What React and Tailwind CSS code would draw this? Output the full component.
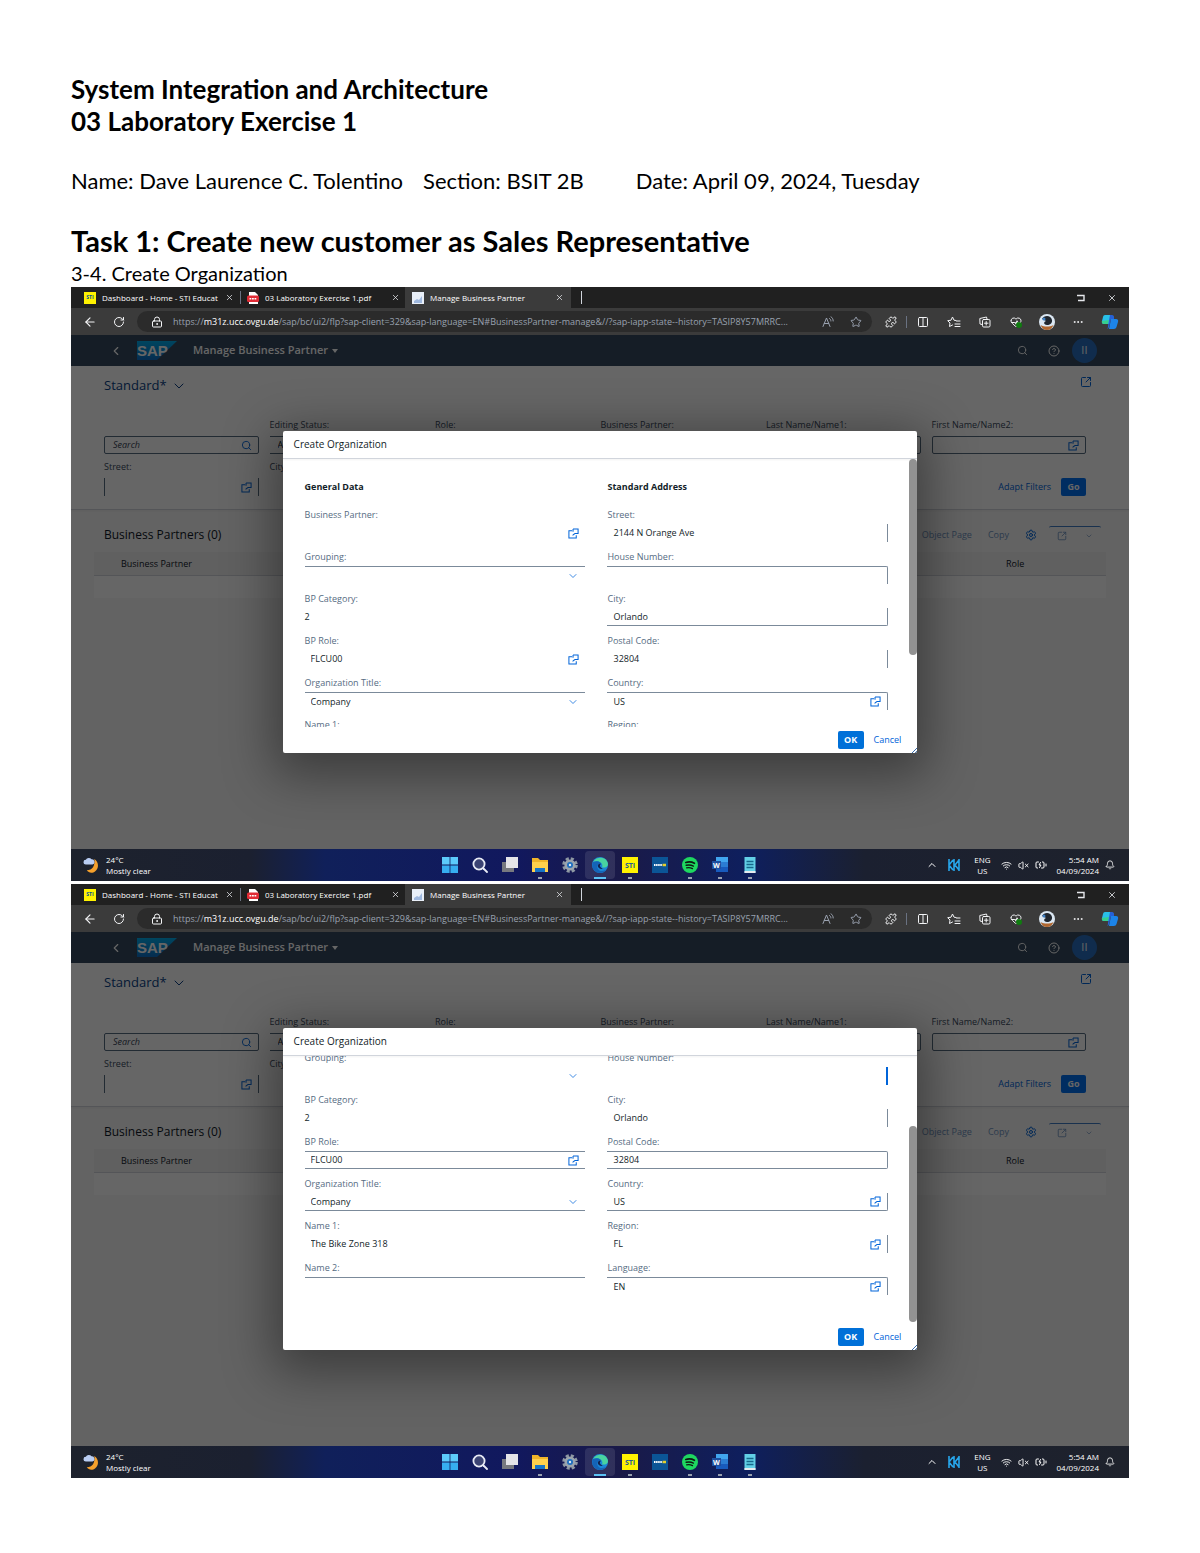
import { useId } from "react";
import {
  ArrowLeft,
  BatteryCharging,
  Bell,
  ChevronDown,
  ChevronLeft,
  ChevronUp,
  CircleQuestionMark,
  Columns2,
  Ellipsis,
  HeartPulse,
  LockKeyhole,
  Puzzle,
  RotateCw,
  Search,
  Settings,
  SquareArrowOutUpRight,
  Star,
  VolumeX,
  Wifi,
  X,
} from "lucide-react";

const PAGE_URL = {
  scheme: "https://",
  host: "m31z.ucc.ovgu.de",
  path: "/sap/bc/ui2/flp?sap-client=329&sap-language=EN#BusinessPartner-manage&//?sap-iapp-state--history=TASIP8Y57MRRC...",
};

const firstView = {
  scrolled: false,
  left: [
    { label: "Business Partner:", value: "", icon: "help" },
    { label: "Grouping:", value: "", icon: "down", edge: "border-t" },
    { label: "BP Category:", value: "2", icon: "none" },
    { label: "BP Role:", value: "FLCU00", icon: "help" },
    { label: "Organization Title:", value: "Company", icon: "down", edge: "border-t" },
    { label: "Name 1:", value: "The Bike Zone 318" },
  ],
  right: [
    { label: "Street:", value: "2144 N Orange Ave", edge: "border-r" },
    { label: "House Number:", value: "", edge: "border-t border-r rounded-tr-xs" },
    { label: "City:", value: "Orlando", edge: "border-b border-r rounded-br-xs" },
    { label: "Postal Code:", value: "32804", edge: "border-r" },
    { label: "Country:", value: "US", icon: "help", edge: "border-t border-r rounded-tr-xs" },
    { label: "Region:", value: "FL", icon: "help" },
  ],
};

const secondView = {
  scrolled: true,
  left: [
    { label: "Business Partner:", value: "", icon: "help" },
    { label: "Grouping:", value: "", icon: "down" },
    { label: "BP Category:", value: "2", icon: "none" },
    { label: "BP Role:", value: "FLCU00", icon: "help", edge: "border-y" },
    { label: "Organization Title:", value: "Company", icon: "down", edge: "border-b" },
    { label: "Name 1:", value: "The Bike Zone 318" },
    { label: "Name 2:", value: "", edge: "border-t" },
  ],
  right: [
    { label: "Street:", value: "2144 N Orange Ave", edge: "border-r" },
    { label: "House Number:", value: "", edge: "border-r-2", focus: true },
    { label: "City:", value: "Orlando", edge: "border-r" },
    { label: "Postal Code:", value: "32804", edge: "border-y border-r rounded-r-xs" },
    { label: "Country:", value: "US", icon: "help", edge: "border-b border-r rounded-br-xs" },
    { label: "Region:", value: "FL", icon: "help", edge: "border-r" },
    { label: "Language:", value: "EN", icon: "help", edge: "border-t border-r rounded-tr-xs" },
  ],
};

function ValueHelpIcon() {
  return (
    <svg viewBox="0 0 12 12" className="size-[11px]" fill="none" stroke="currentColor" strokeWidth="1.100">
      <path d="M4.500 3H1v8h8V8" />
      <path d="M5.500 1H11v5H7.500" />
      <path d="M5.500 1v3M5 8l2.500-2" />
    </svg>
  );
}

function SapLogo() {
  return (
    <svg viewBox="0 0 40 19" className="h-[19px] w-10" role="img" aria-label="SAP">
      <defs>
        <linearGradient id="sap" x1="0" y1="0" x2="0" y2="1">
          <stop offset="0" stopColor="#00aeef" />
          <stop offset="1" stopColor="#0f6fc6" />
        </linearGradient>
      </defs>
      <path d="M0 0h40L20 19H0z" fill="url(#sap)" />
      <text x="0" y="15" fill="#fff" fontSize="15" fontWeight="700" fontFamily="Liberation Sans, sans-serif">
        SAP
      </text>
    </svg>
  );
}

function ReadAloudIcon() {
  return (
    <svg viewBox="0 0 12 12" className="size-3" fill="none" stroke="currentColor" strokeLinecap="round">
      <path d="M1 10.500L4.500 2 8 10.500M2.300 7.500h4.400" />
      <path d="M7.500 2.500c1 .6 1.400 1.500 1.400 2.500M9 .800C10.500 1.800 11.200 3.200 11.200 5" />
    </svg>
  );
}

function FavoritesIcon() {
  return (
    <svg viewBox="0 0 14 12" className="h-3 w-3.5" fill="none" stroke="currentColor" strokeLinecap="round" strokeLinejoin="round">
      <path d="M9 4.500L7 4.200 5.500 1 4 4.200l-3.300.5L3 7l-.5 3.500L5.500 9" />
      <path d="M9.500 5H13M8 8h5M8 10.500h5" />
    </svg>
  );
}

function CollectionsIcon() {
  return (
    <svg viewBox="0 0 12 12" className="size-3" fill="none" stroke="currentColor" strokeLinejoin="round" strokeLinecap="round">
      <path d="M3 8.500L1 8 .8 2.500 7.500 1l.5 2" />
      <rect x="3.500" y="3.500" width="7.500" height="7.500" rx="1.200" />
      <path d="M7.200 5.500v3.500M5.500 7.200H9" />
    </svg>
  );
}

function Tab({ icon, title, active, className }) {
  return (
    <div className={`flex items-center ${active ? "bg-[#3b3b3b]" : ""} ${className}`}>
      {icon}
      <span className="ml-1.5 min-w-0 flex-1 overflow-hidden whitespace-nowrap">{title}</span>
      <button type="button" aria-label="Close tab" className="text-gray-200">
        <X className="size-[9px]" />
      </button>
    </div>
  );
}

function TabStrip() {
  return (
    <div className="flex h-[21px] items-stretch bg-[#202020] text-[8px] text-white">
      <Tab
        className="w-[169px] pl-[13px] pr-1.5"
        title="Dashboard - Home - STI Educat"
        icon={<span className="flex h-3 w-3 items-center justify-center bg-[#fff200] text-[5px] font-bold text-[#00549a]">STI</span>}
      />
      <span className="my-1 w-px bg-gray-500" />
      <Tab
        className="w-[164px] pl-1.5 pr-[5px]"
        title="03 Laboratory Exercise 1.pdf"
        icon={
          <svg viewBox="0 0 12 12" className="size-3">
            <path d="M2 0h6l3 3v9H2z" fill="#fff" />
            <rect y="3.500" width="12" height="6.500" rx="1.500" fill="#e02b35" />
            <path d="M2.500 6.800h7" stroke="#fff" strokeWidth="1.500" strokeDasharray="1.800 .7" />
          </svg>
        }
      />
      <Tab
        active
        className="w-[166px] pl-[7px] pr-[7px]"
        title="Manage Business Partner"
        icon={
          <svg viewBox="0 0 12 12" className="size-3">
            <rect width="12" height="12" fill="#e9eff8" />
            <path d="M2 9l3-2 2 1 3-4v7H2z" fill="#9fb8de" />
          </svg>
        }
      />
      <span className="my-1 ml-2.5 w-px bg-gray-300" />
      <div className="ml-auto flex items-center gap-[22px] pr-3 text-gray-200">
        <button type="button" aria-label="Restore window">
          <svg viewBox="0 0 8 8" className="size-2" fill="none" stroke="currentColor" strokeWidth="1.400">
            <path d="M0 1.500h7v5H1" />
          </svg>
        </button>
        <button type="button" aria-label="Close window">
          <X className="size-[10px]" />
        </button>
      </div>
    </div>
  );
}

function CopilotIcon() {
  return (
    <svg viewBox="0 0 18 16" className="h-4 w-[18px]">
      <path d="M4 1h6l-2 9H3C1 10 .5 8.500 1 7l1-4c.3-1.200 1-2 2-2z" fill="#29c0e8" />
      <path d="M1 7l7-1-1 4H3C1 10 .6 8.500 1 7z" fill="#37cf8e" />
      <path d="M10 5h5c2 0 2.600 1.500 2 3l-1.500 5c-.4 1.300-1.200 2-2.500 2H8z" fill="#1c84e8" />
      <path d="M9 1h2c1.500 0 2 1 2 2v2h-3L8 13c-.4 1.200-1 2-2.500 2 1 0 1.500-1 1.500-3z" fill="#2561d8" />
    </svg>
  );
}

function ProfilePicture() {
  return (
    <svg viewBox="0 0 16 16" className="size-4">
      <circle cx="8" cy="8" r="8" fill="#dbe7f2" />
      <path d="M3 5c2-4 9-4 10 1 .5 3-2 5-5 5S4 8 7 7z" fill="#20262e" />
      <path d="M1.500 11c4 2 9 2 13 0-1 3-3.500 5-6.500 5s-5.500-2-6.500-5z" fill="#b0672f" />
      <circle cx="5" cy="5" r="1.500" fill="#3c7fc4" />
    </svg>
  );
}

function AddressBar() {
  const tools = [
    ["Extensions", <Puzzle className="size-3" />],
    ["Split screen", <Columns2 className="size-3" />],
    ["Favorites", <FavoritesIcon />],
    ["Collections", <CollectionsIcon />],
    [
      "Browser essentials",
      <span className="relative">
        <HeartPulse className="size-3" />
        <span className="absolute right-0 bottom-0 size-1.5 rounded-full bg-[#107c10]" />
      </span>,
    ],
    ["Profile", <ProfilePicture />],
    ["Settings and more", <Ellipsis className="size-3" />],
  ];
  return (
    <div className="flex h-[27px] items-center bg-[#3b3b3b] text-gray-100">
      <button type="button" aria-label="Back" className="ml-3">
        <ArrowLeft className="size-3.5" />
      </button>
      <button type="button" aria-label="Refresh" className="ml-4">
        <RotateCw className="size-3" />
      </button>
      <div className="ml-3 flex h-[21px] min-w-0 flex-1 items-center rounded-full bg-[#2b2b2b] px-2.5">
        <LockKeyhole className="mr-2.5 ml-1 size-3 shrink-0" />
        <a href="#app" className="min-w-0 flex-1 overflow-hidden text-[9px] whitespace-nowrap text-gray-400">
          {PAGE_URL.scheme}
          <span className="text-white">{PAGE_URL.host}</span>
          {PAGE_URL.path}
        </a>
        <button type="button" aria-label="Read aloud" className="ml-2 text-gray-400">
          <ReadAloudIcon />
        </button>
        <button type="button" aria-label="Add to favorites" className="ml-4 text-gray-400">
          <Star className="size-3" />
        </button>
      </div>
      <div className="ml-1 flex items-center">
        {tools.map(([label, icon]) => (
          <button
            key={label}
            type="button"
            aria-label={label}
            className="flex w-[31px] justify-center first:border-r first:border-gray-500"
          >
            {icon}
          </button>
        ))}
      </div>
      <button type="button" aria-label="Copilot" className="mr-2.5 ml-2">
        <CopilotIcon />
      </button>
    </div>
  );
}

function ShellBar() {
  return (
    <header className="flex h-[31px] items-center bg-[#354a5f] text-white">
      <button type="button" aria-label="Back" className="ml-[38px]">
        <ChevronLeft className="size-3.5" />
      </button>
      <span className="ml-3.5">
        <SapLogo />
      </span>
      <button type="button" className="ml-4 flex items-center gap-1 text-[11px] font-semibold">
        Manage Business Partner
        <svg viewBox="0 0 6 4" className="h-1 w-1.5">
          <path d="M0 0h6L3 4z" fill="currentColor" />
        </svg>
      </button>
      <div className="mr-8 ml-auto flex items-center gap-5">
        <button type="button" aria-label="Search">
          <Search className="size-[11px]" />
        </button>
        <button type="button" aria-label="Help">
          <CircleQuestionMark className="size-3" />
        </button>
        <button type="button" className="-ml-2 size-[25px] rounded-full bg-[#2a6fc0] text-[11px] tracking-wide">
          II
        </button>
      </div>
    </header>
  );
}

function FilterField({ label, edge = "border rounded-xs", icon, ...input }) {
  const id = useId();
  return (
    <div>
      <label htmlFor={id} className="mb-1 block h-3.5 text-[9px] leading-[14px] whitespace-nowrap text-[#38495b]">
        {label}
      </label>
      <div className={`flex h-[18px] items-center border-[#556b81] bg-white pr-1.5 pl-2 text-[#0064d9] ${edge}`}>
        <input
          id={id}
          aria-label={label ? undefined : input.placeholder}
          className="w-0 flex-1 bg-transparent text-[9px] text-gray-900 outline-none placeholder:text-gray-700 placeholder:italic"
          {...input}
        />
        {icon}
      </div>
    </div>
  );
}

function FilterBar() {
  return (
    <section className="border-b border-gray-300 bg-white px-[33px] pr-[43px] pb-[13px] shadow-xs">
      <div className="mb-3 flex h-10 items-center justify-between text-[#0a3f86]">
        <button type="button" className="flex items-center gap-1 text-[13px]">
          Standard*
          <ChevronDown strokeWidth={1.5} className="size-4" />
        </button>
        <button type="button" aria-label="Share" className="-mr-1.5 mb-2 text-[#0064d9]">
          <SquareArrowOutUpRight className="size-3" />
        </button>
      </div>
      <div className="grid grid-cols-6 gap-x-[11px] gap-y-1.5">
        <FilterField placeholder="Search" icon={<Search className="size-[11px]" />} />
        <FilterField label="Editing Status:" defaultValue="All" edge="border-y" />
        <FilterField label="Role:" icon={<ValueHelpIcon />} />
        <FilterField label="Business Partner:" icon={<ValueHelpIcon />} />
        <FilterField label="Last Name/Name1:" icon={<ValueHelpIcon />} />
        <FilterField label="First Name/Name2:" icon={<ValueHelpIcon />} />
        <FilterField label="Street:" edge="border-x" icon={<ValueHelpIcon />} />
        <FilterField label="City:" edge="border-r" icon={<ValueHelpIcon />} />
        <div className="col-start-6 flex items-end justify-end gap-2.5 text-[9px]">
          <button type="button" className="h-[18px] text-[#0064d9]">
            Adapt Filters
          </button>
          <button type="button" className="h-[18px] w-[25px] rounded-xs bg-[#0070f2] font-bold text-white">
            Go
          </button>
        </div>
      </div>
    </section>
  );
}

function PartnerTable() {
  return (
    <section className="pt-4">
      <div className="mb-2 flex h-[18px] items-center pr-7 pl-[33px]">
        <h2 className="text-xs text-gray-900">Business Partners (0)</h2>
        <div className="ml-auto flex items-center gap-4 text-[9px] text-[#6f93bf]">
          <button type="button">Object Page</button>
          <button type="button">Copy</button>
          <button type="button" aria-label="Table settings" className="text-[#0064d9]">
            <Settings className="size-3" />
          </button>
          <button
            type="button"
            aria-label="Export"
            className="-ml-1 flex h-[18px] w-[52px] items-center justify-between rounded-xs border-t border-[#3f7cc4] px-2"
          >
            <SquareArrowOutUpRight className="size-2.5" />
            <ChevronDown className="size-2" />
          </button>
        </div>
      </div>
      <div className="px-[23px]">
        <table className="w-full table-fixed text-left text-[9px] text-gray-900">
          <thead>
            <tr className="h-[23px] border-b border-gray-300 bg-[#efeff0]">
              <th className="pl-[27px] font-normal">Business Partner</th>
              <th className="w-[100px] font-normal">Role</th>
            </tr>
          </thead>
          <tbody>
            <tr className="h-[23px] bg-white">
              <td colSpan={2} />
            </tr>
          </tbody>
        </table>
      </div>
    </section>
  );
}

function FormField({ label, value, icon, edge = "", focus }) {
  const id = useId();
  const control = "w-0 flex-1 appearance-none bg-transparent text-[9px] text-[#131e29] outline-none";
  return (
    <div className="mb-1.5">
      <label htmlFor={id} className="block text-[9px] leading-[18px] text-[#556b82]">
        {label}
      </label>
      {icon === "none" ? (
        <output id={id} className="block h-[18px] text-[9px] leading-[18px] text-[#131e29]">
          {value}
        </output>
      ) : (
        <div
          className={`flex h-[18px] items-center pr-1.5 pl-1.5 text-[#0064d9] ${
            focus ? "border-[#0064d9]" : "border-[#7b8a9a]"
          } ${edge}`}
        >
          {icon === "down" ? (
            <select id={id} defaultValue={value} className={control}>
              <option>{value}</option>
            </select>
          ) : (
            <input id={id} defaultValue={value} className={control} />
          )}
          {icon === "down" && <ChevronDown strokeWidth={1.5} className="size-3" />}
          {icon === "help" && <ValueHelpIcon />}
        </div>
      )}
    </div>
  );
}

function FormGroup({ title, fields }) {
  return (
    <fieldset className="min-w-0">
      <legend className="mb-2.5 text-[9px] leading-[18px] font-bold text-[#131e29]">{title}</legend>
      {fields.map((field) => (
        <FormField key={field.label} {...field} />
      ))}
    </fieldset>
  );
}

function CreateOrganizationDialog({ view }) {
  return (
    <div
      role="dialog"
      aria-label="Create Organization"
      className="relative w-3/5 overflow-hidden rounded-xs bg-white shadow-[0_12px_50px_10px_rgba(0,0,0,0.4)]"
    >
      <h3 className="border-b border-gray-300 px-[11px] text-[10px] leading-[27px] text-[#131e29] shadow-xs">
        Create Organization
      </h3>
      <div className="flex h-[268px] overflow-hidden">
        <div className={`grid flex-1 grid-cols-2 items-start gap-[22px] pr-[21px] pl-[22px] ${view.scrolled ? "-mt-24" : ""}`}>
          <div className="pt-[19px]">
            <FormGroup title="General Data" fields={view.left} />
          </div>
          <div className="pt-[19px]">
            <FormGroup title="Standard Address" fields={view.right} />
          </div>
        </div>
        <div className={`flex w-2 flex-col pb-0.5 ${view.scrolled ? "justify-end" : ""}`}>
          <div className="h-[196px] rounded-sm bg-[#929292]" />
        </div>
      </div>
      <div className="flex h-[26px] items-start justify-end gap-2.5 pt-1 pr-4 text-[9px]">
        <button type="button" className="h-[18px] w-[26px] rounded-xs bg-[#0070d8] font-bold text-white">
          OK
        </button>
        <button type="button" className="h-[18px] text-[#0064d9]">
          Cancel
        </button>
      </div>
      <svg viewBox="0 0 6 6" className="absolute right-0 bottom-0 size-1.5" stroke="#3c6fae">
        <path d="M1 6l5-5M4 6l2-2" />
      </svg>
    </div>
  );
}

const taskbarApps = [
  {
    name: "Start",
    icon: (
      <g fill="#5ccbfb">
        <path d="M0 0h7.600v7.600H0zM8.400 0H16v7.600H8.400z" />
        <path d="M0 8.400h7.600V16H0zM8.400 8.400H16V16H8.400z" fill="#36aef0" />
      </g>
    ),
  },
  {
    name: "Search",
    icon: (
      <g fill="#3b4373" stroke="#e8ebf5" strokeWidth="1.800" strokeLinecap="round">
        <circle cx="7" cy="7" r="5.600" />
        <path d="M11.500 11.500L15 15" />
      </g>
    ),
  },
  {
    name: "Task view",
    icon: (
      <g>
        <path d="M0 5h12v10H0z" fill="#77797f" />
        <path d="M4 0h12v11H4z" fill="#e4e4e8" />
      </g>
    ),
  },
  {
    name: "File Explorer",
    running: true,
    icon: (
      <g>
        <path d="M0 1h6l2 2h8v12H0z" fill="#f0b429" />
        <path d="M0 5h16v10H0z" fill="#ffd04c" />
        <path d="M3 11h10v4H3z" fill="#1774c7" />
      </g>
    ),
  },
  {
    name: "Settings",
    icon: (
      <g>
        <circle cx="8" cy="8" r="6.300" fill="none" stroke="#8e98a3" strokeWidth="3" strokeDasharray="3 1.950" />
        <circle cx="8" cy="8" r="5.600" fill="#9aa4ae" />
        <circle cx="8" cy="8" r="3" fill="#1e6fc0" />
        <circle cx="8" cy="8" r="1.200" fill="#dfe8f0" />
      </g>
    ),
  },
  {
    name: "Microsoft Edge",
    active: true,
    icon: (
      <g>
        <circle cx="8" cy="8" r="8" fill="#1b86d6" />
        <path d="M1 5C4-1 15-1 16 7c0 3-3 4-6 3.500C12 6 6 3 1 5z" fill="#49d3a0" />
        <path d="M1 5c5-2 8 0 8 2-3-1-5 2-3 5 1 2 4 3 8 1-3 4-9 4-12 0C0 11 0 7 1 5z" fill="#1464b8" />
        <path d="M9 7c-2 1-1 4 2 4.500C8 13 5 10 6 8c.6-1 2-1.400 3-1z" fill="#11224f" />
      </g>
    ),
  },
  {
    name: "STI",
    running: true,
    icon: (
      <g>
        <path d="M0 0h16v16H0z" fill="#fff200" />
        <text x="8" y="10.500" textAnchor="middle" fontSize="7" fontWeight="700" fill="#1a5a96">
          STI
        </text>
      </g>
    ),
  },
  {
    name: "GameQ",
    icon: (
      <g>
        <path d="M0 0h16v16H0z" fill="#0b5596" />
        <path d="M2 8h8" stroke="#fff" strokeWidth="2.200" strokeDasharray="1.500 .6" />
        <path d="M10.500 8H14" stroke="#e4cf2d" strokeWidth="2.500" />
      </g>
    ),
  },
  {
    name: "Spotify",
    running: true,
    icon: (
      <g fill="none" stroke="#0d1a12" strokeLinecap="round">
        <circle cx="8" cy="8" r="8" fill="#1ed760" stroke="none" />
        <path d="M3.800 5.500c3-.9 6-.6 8.600.8" strokeWidth="1.700" />
        <path d="M4.200 8.300c2.600-.7 5-.4 7.200.8" strokeWidth="1.400" />
        <path d="M4.600 10.900c2-.5 4-.3 5.900.7" strokeWidth="1.200" />
      </g>
    ),
  },
  {
    name: "Word",
    running: true,
    icon: (
      <g>
        <path d="M4 0h12v5H4z" fill="#41a5ee" />
        <path d="M4 5h12v5H4z" fill="#2b7cd3" />
        <path d="M4 10h12v5H4z" fill="#185abd" />
        <path d="M0 4h9v8H0z" fill="#1d4fa0" />
        <text x="4.500" y="10.500" textAnchor="middle" fontSize="7" fontWeight="700" fill="#fff">
          W
        </text>
      </g>
    ),
  },
  {
    name: "Notepad",
    running: true,
    icon: (
      <g>
        <path d="M2.500 0h11v16h-11z" fill="#62cfe6" />
        <path d="M2.500 14h11v2h-11z" fill="#e6ebee" />
        <path d="M4.500 4.500h7M4.500 7.500h7M4.500 10.500h7" stroke="#176a8c" strokeWidth="1.300" />
      </g>
    ),
  },
];

function Taskbar() {
  return (
    <footer className="grid h-8 grid-cols-[1fr_auto_1fr] items-center bg-[linear-gradient(90deg,#1d222d_0%,#1b2030_17%,#10205a_24%,#11185e_42%,#1a1a48_52%,#0e1f5e_64%,#1b2030_75%,#1e222c_100%)] text-[8px] leading-[11px] text-white">
      <div className="flex items-center gap-1.5 pl-3">
        <svg viewBox="0 0 18 18" className="size-[17px]">
          <path d="M12 2c5 3 5 10 1 13-3 2.500-7 2-9-1 6 0 9-5 8-12z" fill="#f5a02c" />
          <path d="M3 8a2.500 2.500 0 010-5 3.500 3.500 0 016-.5A2.800 2.800 0 0110 8z" fill="#b9cdf3" />
        </svg>
        <div>
          <p>24°C</p>
          <p>Mostly clear</p>
        </div>
      </div>
      <nav aria-label="Taskbar" className="flex">
        {taskbarApps.map(({ name, icon, running, active }) => (
          <button
            key={name}
            type="button"
            aria-label={name}
            className={`flex h-7 w-[30px] flex-col items-center rounded-sm pt-1.5 ${active ? "bg-white/10" : ""}`}
          >
            <svg viewBox="0 0 16 16" className="size-4">
              {icon}
            </svg>
            {running && <span className="mt-1 h-0.5 w-1 bg-gray-400" />}
            {active && <span className="mt-1 h-0.5 w-3 bg-[#5cc3f5]" />}
          </button>
        ))}
      </nav>
      <div className="flex items-center justify-end gap-1.5 pr-3.5 whitespace-nowrap">
        <ChevronUp className="size-3" />
        <svg viewBox="0 0 12 12" className="mx-1 size-3" fill="none" stroke="#27a5ea" strokeWidth="1.600">
          <path d="M1 0v12M6 0v12M11 0v12M1 6l4-5M1 6l4 5M11 1L7 6l4 5" />
        </svg>
        <p className="mr-1 ml-1 text-center">
          ENG
          <br />
          US
        </p>
        <Wifi className="size-[11px]" />
        <VolumeX className="size-[11px]" />
        <BatteryCharging className="size-3" />
        <p className="ml-1 text-right">
          5:54 AM
          <br />
          04/09/2024
        </p>
        <Bell className="size-2.5" />
      </div>
    </footer>
  );
}

function DesktopCapture({ view }) {
  return (
    <article className="font-['Open_Sans',sans-serif]">
      <TabStrip />
      <AddressBar />
      <main className="relative min-h-[514px] bg-[#f7f7f7]">
        <ShellBar />
        <FilterBar />
        <PartnerTable />
        <div className="absolute inset-0 flex items-center justify-center overflow-hidden bg-black/60">
          <CreateOrganizationDialog view={view} />
        </div>
      </main>
      <Taskbar />
    </article>
  );
}

export default function App() {
  return (
    <div className="min-h-screen bg-white px-[71px] pt-[73px] pb-[75px] font-['Lato',sans-serif] text-black">
      <h1 className="text-[26px] leading-8 font-bold">
        System Integration and Architecture
        <br />
        03 Laboratory Exercise 1
      </h1>
      <p className="mt-7 flex text-[22px] leading-8">
        <span>Name: Dave Laurence C. Tolentino</span>
        <span className="ml-5">Section: BSIT 2B</span>
        <span className="ml-13">Date: April 09, 2024, Tuesday</span>
      </p>
      <h2 className="mt-7 text-[29px] leading-8 font-bold">Task 1: Create new customer as Sales Representative</h2>
      <p className="mt-1 mb-0.5 text-[20px] leading-6">3-4. Create Organization</p>
      <div className="flex flex-col gap-[3px]">
        <DesktopCapture view={firstView} />
        <DesktopCapture view={secondView} />
      </div>
    </div>
  );
}
